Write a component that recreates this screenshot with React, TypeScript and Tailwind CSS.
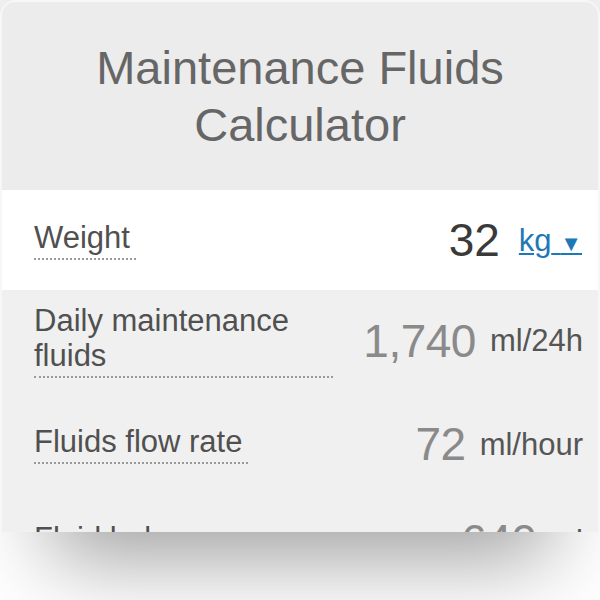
import type { ReactNode } from "react";

function Label({ children, className = "" }: { children: ReactNode; className?: string }) {
  return (
    <div
      className={`border-b-2 border-dotted border-[#9a9a9a] pb-[3px] text-[31px] leading-[35px] text-[#505050] ${className}`}
    >
      {children}
    </div>
  );
}

function Result({ value, unit }: { value: string; unit: string }) {
  return (
    <div className="flex shrink-0 items-center">
      <span className="text-[46px] leading-none tracking-[-0.5px] text-[#8a8a8a]">{value}</span>
      <span className="ml-[14px] text-[31px] leading-none text-[#555]">{unit}</span>
    </div>
  );
}

export default function App() {
  return (
    <div className="h-[600px] w-[600px] overflow-hidden bg-white font-['Liberation_Sans',Arial,sans-serif]">
      <div className="h-[532px] bg-[#eeeeee] shadow-[0_76px_80px_-50px_rgba(0,0,0,0.38)]">
        <div className="h-full overflow-hidden rounded-t-[16px] border-2 border-b-0 border-[#f7f7f7] bg-[#f0f0f0]">
          {/* Title */}
          <header className="h-[188px] bg-[#ececec] pt-[37px] text-center">
            <h1 className="text-[47px] font-normal leading-[57px] text-[#666]">
              Maintenance Fluids
              <br />
              Calculator
            </h1>
          </header>

          {/* Weight input */}
          <div className="flex h-[100px] items-center justify-between bg-white pl-[32px] pr-[16px]">
            <Label className="w-fit pr-[6px]">Weight</Label>
            <div className="flex items-center">
              <span className="text-[46px] leading-none text-[#3a3a3a]">32</span>
              <span className="ml-[19px] text-[31px] leading-none text-[#1d79b6] underline decoration-2 underline-offset-[2px]">
                kg{"\u00a0"}
                <span className="text-[22px] leading-none">▼</span>
              </span>
            </div>
          </div>

          {/* Results */}
          <div className="flex items-center justify-between pb-[16px] pl-[32px] pr-[15px] pt-[13px]">
            <Label className="w-[299px]">Daily maintenance fluids</Label>
            <Result value="1,740" unit="ml/24h" />
          </div>
          <div className="flex items-center justify-between pb-[24px] pl-[32px] pr-[15px] pt-[27px]">
            <Label className="w-fit pr-[6px]">Fluids flow rate</Label>
            <Result value="72" unit="ml/hour" />
          </div>
          <div className="flex items-center justify-between pl-[32px] pr-[15px] pt-[27px]">
            <Label className="w-fit pr-[6px]">Fluid bolus</Label>
            <Result value="640" unit="ml" />
          </div>
        </div>
      </div>
    </div>
  );
}
